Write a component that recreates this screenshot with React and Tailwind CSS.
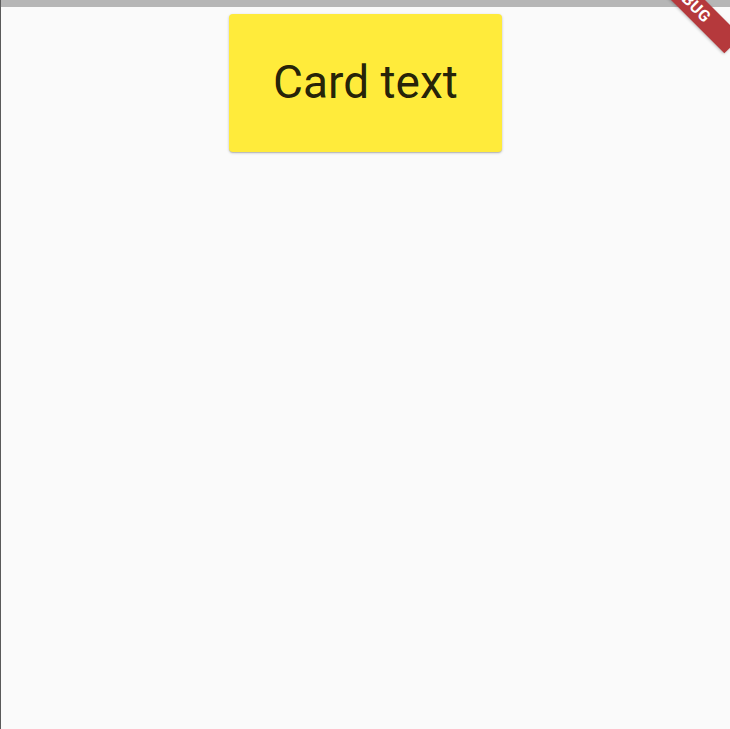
import React from "react";

export default function App() {
  return (
    <div className="relative w-[730px] h-[729px] overflow-hidden bg-[#fafafa] border-l-[1.5px] border-[#5a5a5a]" style={{ fontFamily: "Roboto, 'Liberation Sans', sans-serif" }}>
      <div className="h-[7px] w-full bg-[#b6b6b6]" />
      <div className="flex justify-center pt-[7px]">
        <div className="w-[273px] h-[138px] rounded-[4px] bg-[#ffeb3b] shadow-[0_1px_3px_rgba(0,0,0,0.2),0_1px_1px_rgba(0,0,0,0.14)] flex items-center justify-center pb-[2px]">
          <span className="text-[46px] leading-none text-[rgba(0,0,0,0.87)]">Card text</span>
        </div>
      </div>
      <div className="absolute left-[626px] top-[-11px] w-[124px] h-[24px] rotate-45 bg-[#b5393c] shadow-[0_1px_3px_rgba(0,0,0,0.25)] flex items-center justify-center">
        <span className="text-[16px] font-bold leading-none text-white tracking-[0.5px]">DEBUG</span>
      </div>
    </div>
  );
}
